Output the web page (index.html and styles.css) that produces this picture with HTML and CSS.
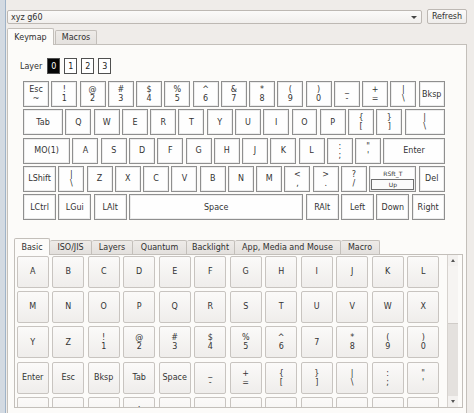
FILE: index.html
```html
<!DOCTYPE html>
<html>
<head>
<meta charset="utf-8">
<link rel="stylesheet" href="styles.css">
</head>
<body>
<div class="frame">
  <div class="edge"></div>
  <div class="win">
    <div class="topline"></div>
    <div class="toolbar">
      <div class="combo"><span class="combo-text">xyz g60</span><span class="combo-arrow"></span></div>
      <div class="btn refresh">Refresh</div>
    </div>
    <div class="tabbar">
      <div class="tab sel">Keymap</div>
      <div class="tab">Macros</div>
    </div>
    <div class="pane">
      <div class="layers">
        <span class="layer-label">Layer</span>
        <span class="lbtn on">0</span>
        <span class="lbtn">1</span>
        <span class="lbtn">2</span>
        <span class="lbtn">3</span>
      </div>
      <div class="kb">
        <div class="row">
          <div class="k"><span>Esc</span><span>~</span></div>
          <div class="k"><span>!</span><span>1</span></div>
          <div class="k"><span>@</span><span>2</span></div>
          <div class="k"><span>#</span><span>3</span></div>
          <div class="k"><span>$</span><span>4</span></div>
          <div class="k"><span>%</span><span>5</span></div>
          <div class="k"><span>^</span><span>6</span></div>
          <div class="k"><span>&amp;</span><span>7</span></div>
          <div class="k"><span>*</span><span>8</span></div>
          <div class="k"><span>(</span><span>9</span></div>
          <div class="k"><span>)</span><span>0</span></div>
          <div class="k"><span>_</span><span>-</span></div>
          <div class="k"><span>+</span><span>=</span></div>
          <div class="k"><span>|</span><span>\</span></div>
          <div class="k"><span>Bksp</span></div>
        </div>
        <div class="row">
          <div class="k w15"><span>Tab</span></div>
          <div class="k"><span>Q</span></div>
          <div class="k"><span>W</span></div>
          <div class="k"><span>E</span></div>
          <div class="k"><span>R</span></div>
          <div class="k"><span>T</span></div>
          <div class="k"><span>Y</span></div>
          <div class="k"><span>U</span></div>
          <div class="k"><span>I</span></div>
          <div class="k"><span>O</span></div>
          <div class="k"><span>P</span></div>
          <div class="k"><span>{</span><span>[</span></div>
          <div class="k"><span>}</span><span>]</span></div>
          <div class="k w15"><span>|</span><span>\</span></div>
        </div>
        <div class="row">
          <div class="k w175"><span>MO(1)</span></div>
          <div class="k"><span>A</span></div>
          <div class="k"><span>S</span></div>
          <div class="k"><span>D</span></div>
          <div class="k"><span>F</span></div>
          <div class="k"><span>G</span></div>
          <div class="k"><span>H</span></div>
          <div class="k"><span>J</span></div>
          <div class="k"><span>K</span></div>
          <div class="k"><span>L</span></div>
          <div class="k"><span>:</span><span>;</span></div>
          <div class="k"><span>"</span><span>'</span></div>
          <div class="k w225"><span>Enter</span></div>
        </div>
        <div class="row">
          <div class="k w125"><span>LShift</span></div>
          <div class="k"><span>|</span><span>\</span></div>
          <div class="k"><span>Z</span></div>
          <div class="k"><span>X</span></div>
          <div class="k"><span>C</span></div>
          <div class="k"><span>V</span></div>
          <div class="k"><span>B</span></div>
          <div class="k"><span>N</span></div>
          <div class="k"><span>M</span></div>
          <div class="k"><span>&lt;</span><span>,</span></div>
          <div class="k"><span>&gt;</span><span>.</span></div>
          <div class="k"><span>?</span><span>/</span></div>
          <div class="k w175 mt"><span class="mt-top">RSft_T</span><span class="mt-inner">Up</span></div>
          <div class="k"><span>Del</span></div>
        </div>
        <div class="row">
          <div class="k w125"><span>LCtrl</span></div>
          <div class="k w125"><span>LGui</span></div>
          <div class="k w125"><span>LAlt</span></div>
          <div class="k w625"><span>Space</span></div>
          <div class="k w125"><span>RAlt</span></div>
          <div class="k w125"><span>Left</span></div>
          <div class="k w125"><span>Down</span></div>
          <div class="k w125"><span>Right</span></div>
        </div>
      </div>

      <div class="lower">
        <div class="ltabbar">
          <div class="ltab sel">Basic</div>
          <div class="ltab">ISO/JIS</div>
          <div class="ltab">Layers</div>
          <div class="ltab">Quantum</div>
          <div class="ltab">Backlight</div>
          <div class="ltab">App, Media and Mouse</div>
          <div class="ltab">Macro</div>
        </div>
        <div class="lpane">
          <div class="scroll">
            <div class="grid">
              <div class="b"><span>A</span></div>
              <div class="b"><span>B</span></div>
              <div class="b"><span>C</span></div>
              <div class="b"><span>D</span></div>
              <div class="b"><span>E</span></div>
              <div class="b"><span>F</span></div>
              <div class="b"><span>G</span></div>
              <div class="b"><span>H</span></div>
              <div class="b"><span>I</span></div>
              <div class="b"><span>J</span></div>
              <div class="b"><span>K</span></div>
              <div class="b"><span>L</span></div>

              <div class="b"><span>M</span></div>
              <div class="b"><span>N</span></div>
              <div class="b"><span>O</span></div>
              <div class="b"><span>P</span></div>
              <div class="b"><span>Q</span></div>
              <div class="b"><span>R</span></div>
              <div class="b"><span>S</span></div>
              <div class="b"><span>T</span></div>
              <div class="b"><span>U</span></div>
              <div class="b"><span>V</span></div>
              <div class="b"><span>W</span></div>
              <div class="b"><span>X</span></div>

              <div class="b"><span>Y</span></div>
              <div class="b"><span>Z</span></div>
              <div class="b"><span>!</span><span>1</span></div>
              <div class="b"><span>@</span><span>2</span></div>
              <div class="b"><span>#</span><span>3</span></div>
              <div class="b"><span>$</span><span>4</span></div>
              <div class="b"><span>%</span><span>5</span></div>
              <div class="b"><span>^</span><span>6</span></div>
              <div class="b"><span>7</span></div>
              <div class="b"><span>*</span><span>8</span></div>
              <div class="b"><span>(</span><span>9</span></div>
              <div class="b"><span>)</span><span>0</span></div>

              <div class="b"><span>Enter</span></div>
              <div class="b"><span>Esc</span></div>
              <div class="b"><span>Bksp</span></div>
              <div class="b"><span>Tab</span></div>
              <div class="b"><span>Space</span></div>
              <div class="b"><span>_</span><span>-</span></div>
              <div class="b"><span>+</span><span>=</span></div>
              <div class="b"><span>{</span><span>[</span></div>
              <div class="b"><span>}</span><span>]</span></div>
              <div class="b"><span>|</span><span>\</span></div>
              <div class="b"><span>:</span><span>;</span></div>
              <div class="b"><span>"</span><span>'</span></div>

              <div class="b"><span>`</span></div>
              <div class="b"><span>,</span></div>
              <div class="b"><span>.</span></div>
              <div class="b"><span>:</span><span>/</span></div>
              <div class="b"><span>~</span><span>`</span></div>
              <div class="b"><span>F1</span></div>
              <div class="b"><span>F2</span></div>
              <div class="b"><span>F3</span></div>
              <div class="b"><span>F4</span></div>
              <div class="b"><span>F5</span></div>
              <div class="b"><span>F6</span></div>
              <div class="b"><span>F7</span></div>
            </div>
            <div class="vscroll">
              <span class="arr up"></span>
              <span class="thumb"></span>
              <span class="trough"></span>
              <span class="arr down"></span>
            </div>
          </div>
        </div>
      </div>
    </div>
  </div>
</div>
</body>
</html>
```

FILE: styles.css
```css
* { box-sizing: border-box; }
html, body { margin: 0; padding: 0; }
body {
  width: 474px;
  height: 413px;
  overflow: hidden;
  background: #efece9;
  font-family: "DejaVu Sans", sans-serif;
  font-size: 8px;
  color: #2f2f2f;
}
.frame {
  display: flex;
  width: 474px;
  height: 413px;
}
.edge {
  width: 6px;
  flex: none;
  background: #d3dae2;
  border-right: 1px solid #9fb3c8;
}
.win {
  flex: 1;
  display: flex;
  flex-direction: column;
  padding: 0 7px 0 1px;
  background: #efece9;
  min-width: 0;
}
.topline {
  height: 9px;
  border-top: 3px solid #efece9;
  flex: none;
}
.toolbar {
  display: flex;
  gap: 5px;
  height: 15px;
  align-items: stretch;
  flex: none;
}
.combo {
  flex: 1;
  margin-top: 1px;
  border: 1px solid #bdb8b3;
  border-radius: 2px;
  background: linear-gradient(#fbfaf9, #f1efed);
  display: flex;
  align-items: center;
  justify-content: space-between;
  padding: 0 4px 0 3px;
}
.combo-arrow {
  width: 0;
  height: 0;
  border-left: 3px solid transparent;
  border-right: 3px solid transparent;
  border-top: 3px solid #444;
}
.btn {
  border: 1px solid #bdb8b3;
  border-radius: 2px;
  background: linear-gradient(#fbfaf9, #efedeb);
  display: flex;
  align-items: center;
  justify-content: center;
}
.refresh { width: 40px; }
.tabbar {
  display: flex;
  margin-top: 4px;
  height: 16px;
  align-items: flex-end;
  flex: none;
  position: relative;
  z-index: 1;
}
.tab {
  height: 14px;
  padding: 0 8px;
  border: 1px solid #c3bfba;
  border-bottom: none;
  border-radius: 2px 2px 0 0;
  background: linear-gradient(#eeebe8, #e4e1de);
  display: flex;
  align-items: center;
  margin-left: 1px;
}
.tab.sel {
  height: 17px;
  margin-left: 0;
  margin-bottom: -1px;
  background: #fcfbf9;
  width: 47px;
  justify-content: center;
}
.tab:not(.sel) { width: 42px; justify-content: center; }
.pane {
  flex: 1;
  border: 1px solid #c3bfba;
  border-bottom: none;
  background: #fcfbf9;
  padding: 13px 3px 0 6px;
  display: flex;
  flex-direction: column;
  min-height: 0;
}
.layers {
  display: flex;
  align-items: center;
  height: 16px;
  padding-left: 6px;
  gap: 4px;
}
.layer-label { margin-right: 1px; }
.lbtn {
  width: 13px;
  height: 16px;
  border: 1px solid #505050;
  background: #fff;
  display: flex;
  align-items: center;
  justify-content: center;
  color: #222;
}
.lbtn.on {
  background: #050505;
  color: #fff;
}
.kb {
  --u: 28.27px;
  --g: 2.3px;
  margin-top: 7px;
  margin-left: 9px;
  display: flex;
  flex-direction: column;
  gap: var(--g);
}
.row {
  display: flex;
  gap: var(--g);
  height: 26px;
}
.k {
  flex: none;
  width: calc(var(--u) - var(--g));
  height: 26px;
  border: 1px solid #8f8f8f;
  background: #fefefe;
  box-shadow: inset 0 0 0 1px #ececec;
  display: flex;
  flex-direction: column;
  align-items: center;
  justify-content: center;
  line-height: 9px;
  color: #333;
}
.w125 { width: calc(var(--u) * 1.25 - var(--g)); }
.w15 { width: calc(var(--u) * 1.5 - var(--g)); }
.w175 { width: calc(var(--u) * 1.75 - var(--g)); }
.w225 { width: calc(var(--u) * 2.25 - var(--g)); }
.w625 { width: calc(var(--u) * 6.25 - var(--g)); }
.k.mt {
  justify-content: space-between;
  padding: 3px 1px 1px;
}
.mt-top { font-size: 6px; line-height: 8px; }
.mt-inner {
  align-self: stretch;
  height: 11px;
  border: 1px solid #6f6f6f;
  background: #fbfbfb;
  font-size: 6px;
  line-height: 9px;
  text-align: center;
}
.lower {
  margin-top: 18px;
  flex: 1;
  display: flex;
  flex-direction: column;
  min-height: 0;
}
.ltabbar {
  display: flex;
  height: 16px;
  align-items: flex-end;
  position: relative;
  z-index: 1;
  flex: none;
}
.ltab {
  height: 14px;
  padding: 0 8px;
  border: 1px solid #c3bfba;
  border-bottom: none;
  border-left: none;
  border-radius: 2px 2px 0 0;
  background: linear-gradient(#eeebe8, #e3e0dd);
  display: flex;
  align-items: center;
  justify-content: center;
  white-space: nowrap;
}
.ltab.sel {
  height: 17px;
  margin-bottom: -1px;
  background: #fcfbf9;
  border-left: 1px solid #c3bfba;
  width: 36px;
}
.ltab:nth-child(2) { width: 42px; }
.ltab:nth-child(3) { width: 41px; }
.ltab:nth-child(4) { width: 54px; }
.ltab:nth-child(5) { width: 48px; }
.ltab:nth-child(6) { width: 106px; }
.ltab:nth-child(7) { width: 39px; }
.lpane {
  height: 154px;
  border: 1px solid #c3bfba;
  background: #fcfbf9;
  padding: 0;
  flex: none;
}
.scroll {
  height: 100%;
  display: flex;
  overflow: hidden;
  background: #fcfbf9;
}
.grid {
  flex: 1;
  padding: 0.5px 0 0 1.7px;
  display: grid;
  grid-template-columns: repeat(12, 32px);
  grid-auto-rows: 32px;
  column-gap: 3.5px;
  row-gap: 3.3px;
  align-content: start;
}
.b {
  border: 1px solid #c8c4c0;
  border-radius: 2px;
  background: linear-gradient(#fbfaf9, #efedeb);
  display: flex;
  flex-direction: column;
  align-items: center;
  justify-content: center;
  line-height: 9px;
  color: #333;
}
.vscroll {
  width: 11px;
  flex: none;
  margin-right: 4px;
  display: flex;
  flex-direction: column;
  background: #e4e1de;
  border-left: 1px solid #d6d2ce;
}
.arr {
  height: 11px;
  flex: none;
  display: flex;
  align-items: center;
  justify-content: center;
  background: #f3f1ef;
}
.arr::after {
  content: "";
  border-left: 2.5px solid transparent;
  border-right: 2.5px solid transparent;
}
.arr.up::after { border-bottom: 3px solid #555; }
.arr.down::after { border-top: 3px solid #555; }
.thumb {
  height: 58px;
  flex: none;
  background: #f6f4f2;
  border-bottom: 1px solid #d0ccc8;
}
.trough { flex: 1; }
```
